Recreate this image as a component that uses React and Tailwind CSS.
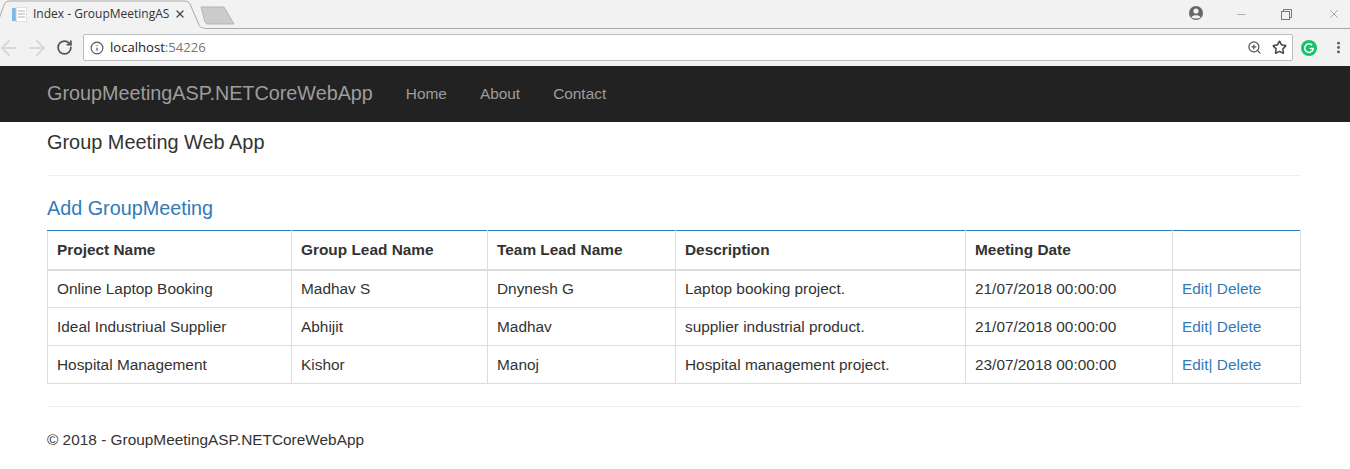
import { Info, ArrowLeft, ArrowRight, RotateCw, ZoomIn, Star, X, Minus, MoreVertical } from 'lucide-react';

const rows = [
  ['Online Laptop Booking', 'Madhav S', 'Dnynesh G', 'Laptop booking project.', '21/07/2018 00:00:00'],
  ['Ideal Industriual Supplier', 'Abhijit', 'Madhav', 'supplier industrial product.', '21/07/2018 00:00:00'],
  ['Hospital Management', 'Kishor', 'Manoj', 'Hospital management project.', '23/07/2018 00:00:00'],
];

const headers = ['Project Name', 'Group Lead Name', 'Team Lead Name', 'Description', 'Meeting Date', ''];

const BrowserBar = () => (
  <div className="h-[66px] bg-[#f2f2f2] flex flex-col">
    <div className="h-[29px] flex items-stretch relative border-b border-[#a9a9a9]">
      <div className="relative w-[194px] h-[29px] z-10 shrink-0">
        <svg width="206" height="30" className="absolute left-0 top-0">
          <path d="M-2 22 L4 5 C5 2 7 1 10 1 L184 1 C187 1 189 2 190 4 L199 25 C200 27 201 28 205 28 L205 30 L-2 30 Z" fill="#f2f2f2" />
          <path d="M-2 22 L4 5 C5 2 7 1 10 1 L184 1 C187 1 189 2 190 4 L199 25 C200 27 201 28 205 28" fill="none" stroke="#a9a9a9" />
        </svg>
        <div className="relative flex items-center h-[28px] pl-[12px]">
          <svg width="15" height="15" viewBox="0 0 15 15" className="shrink-0">
            <rect x="0" y="1" width="4" height="13" fill="#7db9e8" />
            <rect x="4" y="0" width="11" height="15" fill="#ffffff" stroke="#c4c8cf" />
            <path d="M6 4h7M6 7h7M6 10h7" stroke="#aab0b8" />
          </svg>
          <span className="ml-[6px] w-[134px] whitespace-nowrap text-[12px] text-[#333] font-['Open_Sans',sans-serif] leading-none">Index - GroupMeetingAS</span>
          <X size={12} strokeWidth={2.5} className="ml-[7px] text-[#444]" />
        </div>
      </div>
      <svg width="36" height="20" className="ml-[6px] mt-[6px] shrink-0">
        <path d="M1 1 L24 1 L34 18 L8 18 C6 18 6 17 5 16 Z" fill="#cbcbcb" stroke="#b5b5b5" />
      </svg>
      <div className="ml-auto flex items-center text-[#666]">
        <svg width="16" height="16" viewBox="0 0 16 16" className="mr-[31px] -mt-[2px]">
          <circle cx="8" cy="8" r="7" fill="#666" />
          <circle cx="8" cy="6" r="2.6" fill="#f2f2f2" />
          <path d="M3.4 12.2 C5 9.6 11 9.6 12.6 12.2 C11 14 5 14 3.4 12.2 Z" fill="#f2f2f2" />
        </svg>
        <Minus size={13} strokeWidth={1} className="mr-[33px] text-[#777]" />
        <svg width="11" height="11" viewBox="0 0 11 11" className="mr-[35px]" fill="none" stroke="#777">
          <rect x="0.5" y="2.5" width="8" height="8" />
          <path d="M2.5 2.5 V0.5 H10.5 V8.5 H8.5" />
        </svg>
        <X size={14} strokeWidth={1} className="mr-[9px] text-[#777]" />
      </div>
    </div>
    <div className="flex-1 flex items-center">
      <ArrowLeft size={24} strokeWidth={2} className="-ml-[3px] text-[#d8d8d8]" />
      <ArrowRight size={24} strokeWidth={2} className="ml-[4px] text-[#d8d8d8]" />
      <RotateCw size={17} strokeWidth={2.5} className="ml-[7px] text-[#555]" />
      <div className="ml-[10px] w-[1210px] h-[27px] bg-white border border-[#bdbdbd] rounded-[2px] flex items-center pl-[6px] pr-[5px]">
        <Info size={14} strokeWidth={2} className="text-[#555]" />
        <span className="ml-[6px] text-[13.1px] text-[#222] font-['Open_Sans',sans-serif] leading-none">localhost<span className="text-[#777]">:54226</span></span>
        <ZoomIn size={15} strokeWidth={2} className="ml-auto text-[#555]" />
        <Star size={15} strokeWidth={2.4} className="ml-[10px] text-[#444]" />
      </div>
      <svg width="16" height="16" viewBox="0 0 16 16" className="ml-[8px]" fill="none">
        <circle cx="8" cy="8" r="8" fill="#15c26b" />
        <path d="M11.2 5.2 A4.3 4.3 0 1 0 12.3 8.4 L8.6 8.4" stroke="#ffffff" strokeWidth="1.5" />
      </svg>
      <MoreVertical size={15} strokeWidth={2.5} className="ml-[14px] text-[#555]" />
    </div>
  </div>
);

const App = () => {
  return (
    <div className="w-[1350px] h-[469px] overflow-hidden bg-white font-['Liberation_Sans',Arial,sans-serif] text-[15.4px] text-[#333]">
      <BrowserBar />

      <nav className="h-[56px] bg-[#222222] pl-[47px] flex items-center">
        <a className="text-[19.8px] text-[#9d9d9d]">GroupMeetingASP.NETCoreWebApp</a>
        <a className="ml-[33px] text-[#9d9d9d]">Home</a>
        <a className="ml-[33px] text-[#9d9d9d]">About</a>
        <a className="ml-[33px] text-[#9d9d9d]">Contact</a>
      </nav>

      <div className="pl-[47px] pr-[49px]">
        <h2 className="text-[19.9px] leading-[22px] pt-[9px] pb-[22px] border-b border-[#eeeeee]">Group Meeting Web App</h2>
        <h3 className="text-[19.8px] leading-[22px] mt-[21px] text-[#337ab7]">Add GroupMeeting</h3>

        <table className="mt-[11px] w-[1253px] table-fixed border-collapse border-t border-t-[#337ab7]">
          <colgroup>
            <col className="w-[244px]" />
            <col className="w-[196px]" />
            <col className="w-[188px]" />
            <col className="w-[290px]" />
            <col className="w-[207px]" />
            <col className="w-[128px]" />
          </colgroup>
          <thead>
            <tr className="h-[39px]">
              {headers.map((h, i) => (
                <th key={i} className="border-x border-[#dddddd] border-b-2 border-b-[#dddddd] border-t border-t-[#337ab7] px-[9px] text-left font-bold">{h}</th>
              ))}
            </tr>
          </thead>
          <tbody>
            {rows.map((row) => (
              <tr key={row[0]} className="h-[38px]">
                {row.map((cell) => (
                  <td key={cell} className="border border-[#dddddd] px-[9px]">{cell}</td>
                ))}
                <td className="border border-[#dddddd] px-[9px] text-[#337ab7]">Edit| Delete</td>
              </tr>
            ))}
          </tbody>
        </table>

        <hr className="mt-[22px] border-t border-[#eeeeee]" />
        <footer className="mt-[23px] text-[15.4px] leading-[20px]">© 2018 - GroupMeetingASP.NETCoreWebApp</footer>
      </div>
    </div>
  );
};

export default App;
